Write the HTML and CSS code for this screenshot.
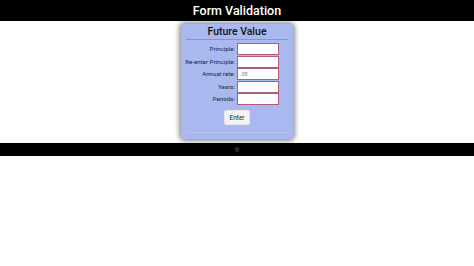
FILE: index.html
```html
<!DOCTYPE html>
<html lang="en">
<head>
  <meta charset="UTF-8">
  <meta name="viewport" content="width=device-width, initial-scale=1.0">
  <title>Form Validation</title>
  <link rel="stylesheet" href="styles.css">
</head>
<body>
  <header class="cabecera">
    <h1>Form Validation</h1>
  </header>
  <main class="contenido">
    <form class="tarjeta">
      <h2>Future Value</h2>
      <div class="fila">
        <label for="principle">Principle:</label>
        <input type="text" id="principle">
      </div>
      <div class="fila">
        <label for="principle2">Re-enter Principle:</label>
        <input type="text" id="principle2">
      </div>
      <div class="fila">
        <label for="rate">Annual rate:</label>
        <input type="text" id="rate" placeholder=".08">
      </div>
      <div class="fila">
        <label for="years">Years:</label>
        <input type="text" id="years">
      </div>
      <div class="fila">
        <label for="periods">Periods:</label>
        <input type="text" id="periods">
      </div>
      <div class="acciones">
        <button type="button">Enter</button>
      </div>
    </form>
  </main>
  <footer class="pie">&copy;</footer>
</body>
</html>
```

FILE: styles.css
```css
body {
  margin: 0;
  font-family: Roboto, "Liberation Sans", Arial, sans-serif;
  background: #fff;
}
.cabecera {
  background: #000;
  height: 21px;
  display: flex;
  align-items: center;
  justify-content: center;
}
.cabecera h1 {
  margin: 0;
  color: #fff;
  font-size: 12.5px;
  font-weight: 500;
}
.contenido {
  display: flex;
  justify-content: center;
  padding: 3px 0 4px;
}
.tarjeta {
  width: 102px;
  background: #a9b8ee;
  border-radius: 4px;
  box-shadow: 0 0 5px 2px rgba(0, 0, 0, 0.45);
  padding: 2px 5px 6px;
}
.tarjeta h2 {
  margin: 0 0 3px;
  padding-bottom: 1px;
  line-height: 12px;
  text-align: center;
  font-size: 10.5px;
  font-weight: 500;
  color: #111;
  border-bottom: 1px solid #8c97b8;
}
.fila {
  display: flex;
  align-items: center;
  justify-content: flex-end;
  gap: 2px;
  height: 12.5px;
}
.fila label {
  font-size: 6.2px;
  white-space: nowrap;
  color: #1b2540;
}
.fila input {
  box-sizing: border-box;
  flex: none;
  width: 42px;
  height: 12px;
  margin: 0 9px 0 0;
  padding: 0 2px;
  border: 1px solid #b05a7c;
  background: #fff;
  font-size: 5.5px;
  font-family: inherit;
}
.fila input::placeholder {
  color: #888;
}
.acciones {
  display: flex;
  justify-content: center;
  padding: 4px 0 7px;
  border-bottom: 1px solid #b9c4ef;
}
.acciones button {
  font-family: inherit;
  font-size: 6.5px;
  padding: 3px 4px;
  height: 15px;
  background: #f2f2f2;
  border: 1px solid #e4e4e4;
  border-radius: 2px;
  color: #222;
}
.pie {
  background: #000;
  height: 13px;
  color: #777;
  font-size: 6px;
  text-align: center;
  line-height: 13px;
}
```
